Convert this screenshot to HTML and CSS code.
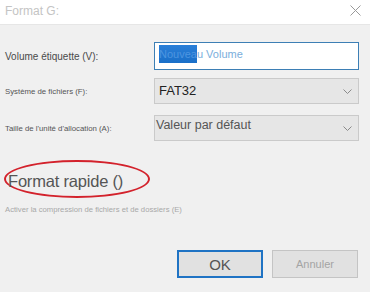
FILE: index.html
```html
<!DOCTYPE html>
<html lang="fr">
<head>
<meta charset="utf-8">
<link rel="stylesheet" href="styles.css">
</head>
<body>
<div class="dialog">
  <div class="titlebar">
    <span class="title">Format G:</span>
    <svg class="close" width="11" height="11" viewBox="0 0 11 11"><path d="M0.5 0.5L10.5 10.5M10.5 0.5L0.5 10.5" stroke="#9a9a9a" stroke-width="1" fill="none"/></svg>
  </div>
  <div class="content">
    <div class="row row-vol">
      <span class="label label-vol">Volume étiquette (V):</span>
      <div class="input"><span class="sel">Nouvea</span><span class="rest">u Volume</span></div>
    </div>
    <div class="row row-fs">
      <span class="label label-sm">Système de fichiers (F):</span>
      <div class="select"><span class="val val-fat">FAT32</span>
        <svg class="chev" width="9" height="6" viewBox="0 0 9 6"><path d="M0.5 0.5L4.5 4.5L8.5 0.5" stroke="#8a8a8a" stroke-width="1" fill="none"/></svg></div>
    </div>
    <div class="row row-alloc">
      <span class="label label-sm">Taille de l'unité d'allocation (A):</span>
      <div class="select select2"><span class="val val-def">Valeur par défaut</span>
        <svg class="chev" width="9" height="6" viewBox="0 0 9 6"><path d="M0.5 0.5L4.5 4.5L8.5 0.5" stroke="#8a8a8a" stroke-width="1" fill="none"/></svg></div>
    </div>
    <div class="quick"><span>Format rapide ()</span></div>
    <div class="compress">Activer la compression de fichiers et de dossiers (E)</div>
    <div class="buttons">
      <div class="btn btn-ok">OK</div>
      <div class="btn btn-cancel">Annuler</div>
    </div>
  </div>
</div>
</body>
</html>
```
FILE: styles.css
```css
html, body {
  margin: 0;
  padding: 0;
  background: #f0f0f0;
}
.dialog {
  width: 370px;
  height: 292px;
  font-family: "Liberation Sans", Arial, sans-serif;
  background: #f0f0f0;
  overflow: hidden;
}
.titlebar {
  height: 25px;
  background: #ffffff;
  display: flex;
  align-items: center;
  justify-content: space-between;
  padding: 0 9px 0 5px;
  border-bottom: 1px solid #e6e6e6;
  box-sizing: border-box;
}
.title {
  font-size: 12px;
  color: #c4c4c4;
  margin-top: -2px;
}
.close {
  margin-top: -4px;
}
.content {
  padding: 0 11px 0 5px;
}
.row {
  display: flex;
  align-items: center;
  justify-content: space-between;
}
.label {
  color: #4a4a4a;
}
.label-vol {
  font-size: 10px;
}
.label-sm {
  font-size: 7.8px;
  color: #555;
}
.row-vol {
  margin-top: 17px;
}
.input {
  width: 205px;
  height: 28px;
  box-sizing: border-box;
  border: 1px solid #3d7fb5;
  background: #fff;
  display: flex;
  align-items: flex-start;
  padding: 2px 0 0 4px;
}
.sel {
  background: linear-gradient(#2a7fd8, #1a6fc8);
  color: #4d95e0;
  font-size: 11px;
  height: 18px;
  line-height: 18px;
}
.rest {
  color: #7aaedc;
  font-size: 11px;
  line-height: 18px;
}
.select {
  width: 205px;
  height: 26px;
  box-sizing: border-box;
  border: 1px solid #cacaca;
  background: #e6e6e6;
  display: flex;
  align-items: center;
  justify-content: space-between;
  padding: 0 6px 0 4px;
}
.row-fs {
  margin-top: 8px;
}
.row-alloc {
  margin-top: 11px;
}
.val-fat {
  font-size: 13px;
  color: #222;
  margin-top: -1px;
}
.val-def {
  font-size: 12.5px;
  color: #555;
  margin-top: -6px;
  margin-left: -3px;
}
.chev {
  margin-top: 2px;
}
.quick {
  margin-top: 19px;
  margin-left: -1px;
  width: 146px;
  height: 38px;
  box-sizing: border-box;
  border: 2px solid #d3222c;
  border-radius: 50%;
  display: flex;
  align-items: center;
  padding-left: 2px;
}
.quick span {
  font-size: 16.5px;
  color: #555;
  margin-top: 5px;
  letter-spacing: -0.2px;
}
.compress {
  margin-top: 7px;
  font-size: 7.7px;
  color: #a8a8a8;
}
.buttons {
  display: flex;
  justify-content: flex-end;
  gap: 9px;
  margin-top: 36px;
  padding-right: 1px;
}
.btn {
  width: 86px;
  height: 28px;
  box-sizing: border-box;
  display: flex;
  align-items: center;
  justify-content: center;
  background: #e1e1e1;
}
.btn-ok {
  border: 2px solid #1f73c4;
  font-size: 15px;
  color: #555;
}
.btn-cancel {
  border: 1px solid #c4c4c4;
  font-size: 11px;
  color: #a4a4a4;
}
```
